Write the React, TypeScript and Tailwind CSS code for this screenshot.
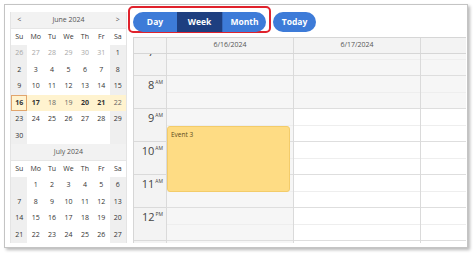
import React from 'react'

type Day = { n: number; other?: boolean } | null

const june: Day[][] = [
  [{ n: 26, other: true }, { n: 27, other: true }, { n: 28, other: true }, { n: 29, other: true }, { n: 30, other: true }, { n: 31, other: true }, { n: 1 }],
  [2, 3, 4, 5, 6, 7, 8].map(n => ({ n })),
  [9, 10, 11, 12, 13, 14, 15].map(n => ({ n })),
  [16, 17, 18, 19, 20, 21, 22].map(n => ({ n })),
  [23, 24, 25, 26, 27, 28, 29].map(n => ({ n })),
  [{ n: 30 }, null, null, null, null, null, null],
]

// only the weeks that fit in the visible navigator
const july: Day[][] = [
  [null, 1, 2, 3, 4, 5, 6].map(n => (n ? { n } : null)),
  [7, 8, 9, 10, 11, 12, 13].map(n => ({ n })),
  [14, 15, 16, 17, 18, 19, 20].map(n => ({ n })),
  [21, 22, 23, 24, 25, 26, 27].map(n => ({ n })),
]

const dayNames = ['Su', 'Mo', 'Tu', 'We', 'Th', 'Fr', 'Sa']
const busy = [16, 17, 20, 21]

function Month({ title, weeks, arrows, selectedWeek }: { title: string; weeks: Day[][]; arrows?: boolean; selectedWeek?: number }) {
  return (
    <div>
      <div className="grid grid-cols-7 h-[17px] bg-[#f2f2f2] border-b border-[#e6e6e6] text-[7px] text-[#555] items-center">
        <div className="text-center">{arrows ? '<' : ''}</div>
        <div className="col-span-5 text-center">{title}</div>
        <div className="text-center">{arrows ? '>' : ''}</div>
      </div>
      <div className="grid grid-cols-7 h-[16px] bg-white items-center text-[7px] text-[#333]">
        {dayNames.map(d => <div key={d} className="text-center">{d}</div>)}
      </div>
      {weeks.map((week, wi) => (
        <div key={wi} className="grid grid-cols-7">
          {week.map((d, di) => {
            const weekend = di === 0 || di === 6
            const selected = wi === selectedWeek
            const today = selected && di === 0
            let bg = weekend ? 'bg-[#efefef]' : 'bg-white'
            if (selected) bg = 'bg-[#fff3cf]'
            return (
              <div
                key={di}
                className={`h-[16.5px] flex items-center justify-center text-[7px] ${bg} ${today ? 'border border-[#e2a56c] bg-[#ffe9cc]' : ''} ${
                  d?.other ? 'text-[#a8a8a8]' : selected && !busy.includes(d?.n ?? 0) ? 'text-[#666]' : 'text-[#333]'
                } ${selected && d && busy.includes(d.n) ? 'font-bold text-[#222]' : ''}`}
              >
                {d ? d.n : ''}
              </div>
            )
          })}
        </div>
      ))}
    </div>
  )
}

// 7 AM is scrolled mostly out of view; the 1 PM row only shows its top edge
const hours = [7, 8, 9, 10, 11, 12, 13]
const lastLabelled = 12

// third column is only partly in view, its centred label falls outside
const columns = [
  { key: 'd16', label: '6/16/2024', weekend: true, event: true },
  { key: 'd17', label: '6/17/2024', weekend: false, event: false },
  { key: 'd18', label: '', weekend: false, event: false },
]

function DayColumn({ weekend, event }: { weekend: boolean; event: boolean }) {
  const slots = Array.from({ length: 14 }, (_, i) => i)
  return (
    <div className="relative w-[127px] shrink-0 border-l border-[#dadada]">
      {slots.map(i => {
        const hour = 7 + Math.floor(i / 2)
        const gray = weekend || hour < 9
        return (
          <div
            key={i}
            className={`h-[16.5px] border-b ${i % 2 ? 'border-[#dedede]' : 'border-[#eeeeee]'} ${gray ? 'bg-[#f6f6f6]' : 'bg-white'}`}
          />
        )
      })}
      {event && (
        <div className="absolute top-[82.5px] left-0 w-[123px] h-[66px] rounded-[3px] bg-[#fedc84] border border-[#f3cc6a] text-[6.5px] text-[#5c4b1c] pl-[3px] pt-[5px] leading-none">
          Event 3
        </div>
      )}
    </div>
  )
}

export default function App() {
  return (
    <div className="w-[474px] h-[253px] bg-white overflow-hidden font-['Open_Sans',sans-serif]">
      <div className="ml-[4px] mt-[4px] w-[464px] h-[244px] border border-[#c4c4c4] shadow-[2px_2px_3px_rgba(0,0,0,0.28)] bg-white flex pl-[5px]">
        {/* navigator */}
        <div className="w-[117px] h-[231px] mt-[7px] overflow-hidden border-l border-r border-[#e4e4e4]">
          <Month title="June 2024" weeks={june} arrows selectedWeek={3} />
          <Month title="July 2024" weeks={july} />
        </div>

        <div className="ml-[1px] flex flex-col">
          {/* toolbar */}
          <div className="flex items-start mt-[1px]">
            <div className="border-2 border-[#e0222c] rounded-[5px] pl-[3px] pr-[3px] pt-[4px] pb-0 h-[27px]">
              <div className="flex h-[20px] rounded-full overflow-hidden text-[8.5px] font-bold text-white">
                <div className="w-[44px] flex items-center justify-center bg-[#3d7bd8]">Day</div>
                <div className="w-[45px] flex items-center justify-center bg-[#1e3f80]">Week</div>
                <div className="w-[44px] flex items-center justify-center bg-[#3d7bd8] border-l border-[#3568bb]">Month</div>
              </div>
            </div>
            <div className="ml-[2px] mt-[6px] w-[43px] h-[20px] rounded-full bg-[#3d7bd8] text-white text-[8.5px] font-bold flex items-center justify-center">
              Today
            </div>
          </div>

          {/* calendar */}
          <div className="ml-[5px] mt-[4px] w-[333px] overflow-hidden border-l border-t border-[#d6d6d6]">
            <div className="flex h-[16px] bg-[#f3f3f3] border-b border-[#d6d6d6]">
              <div className="w-[32px] shrink-0" />
              {columns.map(c => (
                <div key={c.key} className="w-[127px] shrink-0 border-l border-[#dadada] flex items-center justify-center text-[7px] text-[#555]">
                  {c.label}
                </div>
              ))}
            </div>
            <div className="h-[189px] overflow-hidden">
              <div className="flex mt-[-11px]">
                <div className="w-[32px] shrink-0 bg-[#f3f3f3]">
                  {hours.map(h => (
                    <div key={h} className="h-[33px] border-b border-[#dadada] flex justify-end items-start pr-[3px] pt-[2px] text-[#444]">
                      {h <= lastLabelled && (
                        <>
                          <span className="text-[11px] leading-[13px]">{h > 12 ? h - 12 : h}</span>
                          <span className="text-[5px] leading-[8px] ml-[1px]">{h >= 12 ? 'PM' : 'AM'}</span>
                        </>
                      )}
                    </div>
                  ))}
                </div>
                {columns.map(c => (
                  <DayColumn key={c.key} weekend={c.weekend} event={c.event} />
                ))}
              </div>
            </div>
          </div>
        </div>
      </div>
    </div>
  )
}
